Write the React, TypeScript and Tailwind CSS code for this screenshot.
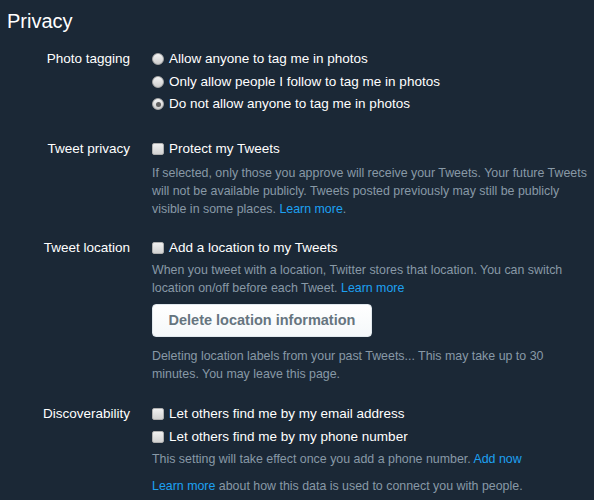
import { useState } from "react";

const PHOTO_OPTIONS = [
  { value: "anyone", label: "Allow anyone to tag me in photos" },
  { value: "following", label: "Only allow people I follow to tag me in photos" },
  { value: "none", label: "Do not allow anyone to tag me in photos" },
];

function Radio({ checked, onChange, label }: { checked: boolean; onChange: () => void; label: string }) {
  return (
    <label className="flex items-center gap-[5px] leading-[22.5px] cursor-pointer" onClick={onChange}>
      <span className="flex h-[12px] w-[12px] items-center justify-center rounded-full border border-[#a8a8a8] bg-gradient-to-b from-[#f4f4f4] to-[#cdcdcd]">
        {checked && <span className="h-[5px] w-[5px] rounded-full bg-[#5f5f5f]" />}
      </span>
      <span>{label}</span>
    </label>
  );
}

function Checkbox({ checked, onChange, label }: { checked: boolean; onChange: () => void; label: string }) {
  return (
    <label className="flex items-center gap-[5px] leading-[22.5px] cursor-pointer" onClick={onChange}>
      <span className="flex h-[12px] w-[12px] items-center justify-center rounded-[2px] border border-[#b0b0b0] bg-gradient-to-b from-[#f0f0f0] to-[#d2d2d2] text-[9px] leading-none text-[#333]">
        {checked ? "✓" : ""}
      </span>
      <span>{label}</span>
    </label>
  );
}

function Row({ label, className = "", children }: { label: string; className?: string; children: React.ReactNode }) {
  return (
    <div className={`grid grid-cols-[130px_1fr] gap-x-[22px] ${className}`}>
      <div className="text-right leading-[22.5px]">{label}</div>
      <div>{children}</div>
    </div>
  );
}

const Link = ({ children }: { children: React.ReactNode }) => (
  <a href="#" className="text-[#1da1f2]">
    {children}
  </a>
);

export default function App() {
  const [photo, setPhoto] = useState("none");
  const [protect, setProtect] = useState(false);
  const [location, setLocation] = useState(false);
  const [byEmail, setByEmail] = useState(false);
  const [byPhone, setByPhone] = useState(false);

  return (
    <div className="h-[500px] w-full overflow-hidden bg-[#1b2836] font-['Liberation_Sans',Arial,sans-serif] text-[13.5px] text-white">
      <h2 className="pl-[7px] pt-[9px] text-[20px] leading-[24px]">Privacy</h2>

      {/* Photo tagging */}
      <Row label="Photo tagging" className="mt-[15px]">
        {PHOTO_OPTIONS.map((o) => (
          <Radio key={o.value} checked={photo === o.value} onChange={() => setPhoto(o.value)} label={o.label} />
        ))}
      </Row>

      {/* Tweet privacy */}
      <Row label="Tweet privacy" className="mt-[22.5px]">
        <Checkbox checked={protect} onChange={() => setProtect(!protect)} label="Protect my Tweets" />
        <p className="mt-[3px] w-[437px] text-[12.4px] leading-[18px] text-[#8899a6]">
          If selected, only those you approve will receive your Tweets. Your future Tweets will not be available
          publicly. Tweets posted previously may still be publicly visible in some places. <Link>Learn more</Link>.
        </p>
      </Row>

      {/* Tweet location */}
      <Row label="Tweet location" className="mt-[19px]">
        <Checkbox checked={location} onChange={() => setLocation(!location)} label="Add a location to my Tweets" />
        <p className="mt-[2px] w-[437px] text-[12.4px] leading-[18px] text-[#8899a6]">
          When you tweet with a location, Twitter stores that location. You can switch location on/off before each
          Tweet. <Link>Learn more</Link>
        </p>
        <button className="mt-[7px] h-[33px] w-[220px] rounded-[4px] border border-[#e1e8ed] bg-gradient-to-b from-white to-[#f5f8fa] text-[14.5px] font-bold text-[#66757f]">
          Delete location information
        </button>
        <p className="mt-[10px] w-[437px] text-[12.4px] leading-[18px] text-[#8899a6]">
          Deleting location labels from your past Tweets... This may take up to 30 minutes. You may leave this page.
        </p>
      </Row>

      {/* Discoverability */}
      <Row label="Discoverability" className="mt-[20px]">
        <Checkbox checked={byEmail} onChange={() => setByEmail(!byEmail)} label="Let others find me by my email address" />
        <Checkbox checked={byPhone} onChange={() => setByPhone(!byPhone)} label="Let others find me by my phone number" />
        <p className="mt-[2px] text-[12.4px] leading-[18px] text-[#8899a6]">
          This setting will take effect once you add a phone number. <Link>Add now</Link>
        </p>
        <p className="mt-[9px] text-[12.4px] leading-[18px] text-[#8899a6]">
          <Link>Learn more</Link> about how this data is used to connect you with people.
        </p>
      </Row>
    </div>
  );
}
